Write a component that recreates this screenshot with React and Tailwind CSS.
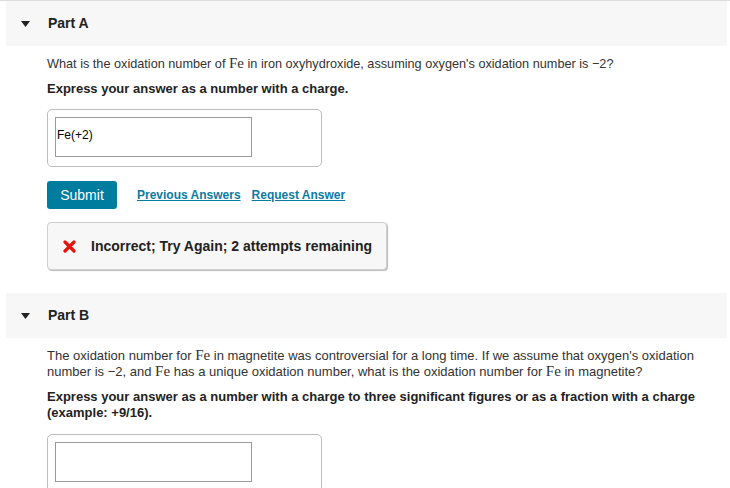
function Fe() {
  return <span className="font-['Liberation_Serif',serif] text-[15px] leading-none">Fe</span>;
}

function PartHeader({ title }) {
  return (
    <div className="ml-[6px] flex h-[45px] w-[721px] items-center bg-[#f7f7f7]">
      <svg className="ml-[15px]" width="9" height="6" viewBox="0 0 9 6">
        <path d="M0 0 L9 0 L4.5 6 Z" fill="#222" />
      </svg>
      <span className="ml-[18px] text-[14px] font-bold text-[#222]">{title}</span>
    </div>
  );
}

function AnswerBox({ value }) {
  return (
    <div className="h-[58px] w-[275px] rounded-[5px] border border-[#bdbdbd] p-[7px]">
      <div className="flex h-[40px] w-[197px] items-start border border-[#999] pt-[8px] pl-[1px] text-[12px] text-black">
        {value}
      </div>
    </div>
  );
}

export default function App() {
  return (
    <div className="h-[488px] w-[730px] overflow-hidden bg-white font-['Liberation_Sans',Arial,sans-serif] text-[#333]">
      <div className="border-t border-[#dcdcdc]" />
      <PartHeader title="Part A" />
      <div className="pl-[47px]">
        <p className="pt-[10px] text-[12.7px] leading-[16px]">
          What is the oxidation number of <Fe /> in iron oxyhydroxide, assuming oxygen's oxidation number is −2?
        </p>
        <p className="mt-[9px] text-[13px] font-bold leading-[16px] text-[#222]">
          Express your answer as a number with a charge.
        </p>
        <div className="mt-[12px]">
          <AnswerBox value="Fe(+2)" />
        </div>
        <div className="mt-[14px] flex items-center">
          <button className="h-[28px] w-[70px] rounded-[3px] bg-[#007c9f] text-[14px] text-white">
            Submit
          </button>
          <a className="ml-[20px] text-[12px] font-bold text-[#0b7ba3] underline">Previous Answers</a>
          <a className="ml-[11px] text-[12px] font-bold text-[#0b7ba3] underline">Request Answer</a>
        </div>
        <div className="mt-[13px] flex h-[48px] w-[340px] items-center rounded-[4px] border border-[#cfcfcf] bg-[#f7f7f7] shadow-[1px_1px_1px_#bbb]">
          <svg className="ml-[15px]" width="13" height="13" viewBox="0 0 13 13">
            <path d="M2 2 L11 11 M11 2 L2 11" stroke="#e8120c" strokeWidth="3.2" strokeLinecap="round" />
          </svg>
          <span className="ml-[15px] text-[14px] font-bold text-[#222]">
            Incorrect; Try Again; 2 attempts remaining
          </span>
        </div>
      </div>
      <div className="mt-[23px]">
        <PartHeader title="Part B" />
      </div>
      <div className="pl-[47px] pr-[28px]">
        <p className="pt-[10px] text-[13px] leading-[16px]">
          The oxidation number for <Fe /> in magnetite was controversial for a long time. If we assume that oxygen's oxidation number is −2, and <Fe /> has a unique oxidation number, what is the oxidation number for <Fe /> in magnetite?
        </p>
        <p className="mt-[9px] text-[13px] font-bold leading-[16px] text-[#222]">
          Express your answer as a number with a charge to three significant figures or as a fraction with a charge (example: +9/16).
        </p>
        <div className="mt-[13px]">
          <AnswerBox value="" />
        </div>
      </div>
    </div>
  );
}
